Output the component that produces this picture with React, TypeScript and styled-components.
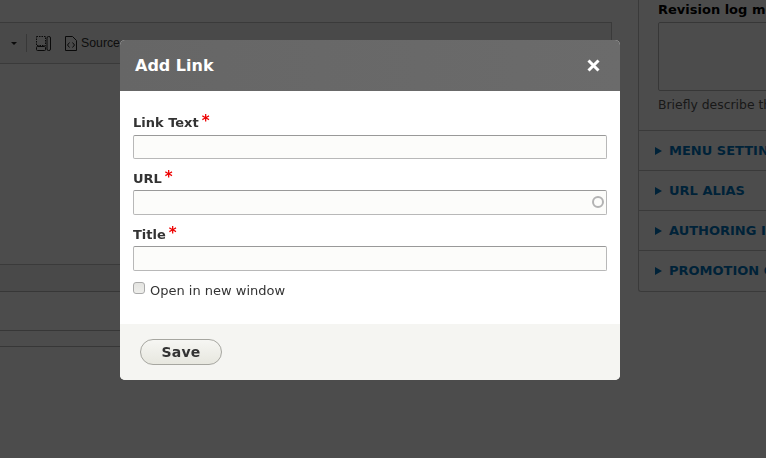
import React from 'react';
import styled, { createGlobalStyle } from 'styled-components';

const GlobalStyle = createGlobalStyle`
  html, body {
    margin: 0;
    padding: 0;
    height: 100%;
    overflow: hidden;
    background: #fff;
    font-family: "DejaVu Sans", Verdana, sans-serif;
    font-size: 13px;
    color: #333;
  }
  * { box-sizing: border-box; }
`;

const Page = styled.div`
  display: flex;
  width: 766px;
  height: 458px;
  overflow: hidden;
`;

const Main = styled.div`
  width: 612px;
  padding-top: 22px;
  flex: none;
`;

const Editor = styled.div`
  height: 243px;
  border: 1px solid #c4c4c4;
  border-left: 0;
`;

const Toolbar = styled.div`
  display: flex;
  align-items: center;
  height: 41px;
  padding-left: 10px;
  background: #f3f3f3;
  border-bottom: 1px solid #c4c4c4;
`;

const Caret = styled.span`
  width: 0;
  height: 0;
  border-left: 3px solid transparent;
  border-right: 3px solid transparent;
  border-top: 3px solid #222;
  margin-left: 1px;
`;

const Divider = styled.span`
  width: 1px;
  height: 18px;
  margin: 0 9px 0 9px;
  background: #bbb;
`;

const ToolIcon = styled.svg`
  flex: none;
  margin-right: 14px;
  &:last-of-type { margin-right: 4px; }
`;

const ToolLabel = styled.span`
  font-family: "Liberation Sans", Arial, sans-serif;
  font-size: 12.3px;
  color: #333;
`;

const Row = styled.div<{ $h: number; $shade?: boolean }>`
  height: ${p => p.$h}px;
  background: ${p => (p.$shade ? '#f3f3f3' : '#fff')};
  border-bottom: 1px solid #b8b8b8;
`;

const Sidebar = styled.aside`
  width: 154px;
  height: 292px;
  margin-left: 26px;
  flex: none;
  border-left: 1px solid #c4c4c4;
  border-bottom: 1px solid #c4c4c4;
  border-bottom-left-radius: 3px;
  overflow: hidden;
`;

const Revision = styled.div`
  height: 130px;
  padding: 2px 0 0 19px;
  white-space: nowrap;
`;

const RevisionLabel = styled.div`
  font-weight: bold;
  font-size: 13px;
  line-height: 16px;
  color: #000;
`;

const RevisionBox = styled.div`
  width: 180px;
  height: 69px;
  margin-top: 4px;
  border: 1px solid #b8b8b8;
  border-radius: 2px;
`;

const RevisionHint = styled.div`
  margin-top: 6px;
  font-size: 12.4px;
  line-height: 16px;
  color: #555;
`;

const Section = styled.div`
  display: flex;
  align-items: center;
  gap: 7px;
  height: 40px;
  padding-left: 16px;
  border-top: 1px solid #c4c4c4;
  color: #0074bd;
  font-weight: bold;
  font-size: 13px;
  white-space: nowrap;
`;

const Arrow = styled.span`
  width: 0;
  height: 0;
  flex: none;
  border-top: 4px solid transparent;
  border-bottom: 4px solid transparent;
  border-left: 7px solid #0074bd;
`;

const Overlay = styled.div`
  position: fixed;
  inset: 0;
  padding: 40px 0 0 120px;
  background: rgba(0, 0, 0, 0.7);
`;

const Dialog = styled.div`
  width: 500px;
  height: 340px;
  display: flex;
  flex-direction: column;
  border-radius: 5px;
  overflow: hidden;
  background: #fff;
`;

const TitleBar = styled.div`
  display: flex;
  align-items: center;
  justify-content: space-between;
  height: 51px;
  padding: 0 20px 0 15px;
  background: linear-gradient(to right, #666, #6b6b6b);
`;

const Title = styled.h2`
  margin: 0;
  font-size: 16px;
  font-weight: bold;
  color: #fff;
`;

const Close = styled.svg`
  display: block;
`;

const Form = styled.form`
  flex: 1;
  padding: 20px 13px 0;
`;

const Label = styled.label`
  display: block;
  height: 23px;
  font-size: 13px;
  font-weight: bold;
  line-height: 22px;
  color: #333;
`;

const Field = styled.div`
  margin-bottom: 8px;
  &:first-child ${Label} {
    height: 24px;
  }
`;

const Star = styled.span`
  position: relative;
  top: -1px;
  margin-left: 3px;
  font-size: 15px;
  font-weight: bold;
  color: #e00;
`;

const InputWrap = styled.div`
  position: relative;
`;

const Input = styled.input<{ $h: number }>`
  display: block;
  width: 474px;
  height: ${p => p.$h}px;
  padding: 0;
  background: #fcfcfa;
  border: 1px solid #b8b8b8;
  border-top-color: #999;
  border-radius: 2px;
  outline: none;
`;

const Throbber = styled.span`
  position: absolute;
  right: 3px;
  top: 6px;
  width: 12px;
  height: 12px;
  border: 2px solid #b3b3b3;
  border-radius: 50%;
`;

const CheckRow = styled.div`
  display: flex;
  align-items: flex-start;
  gap: 5px;
  margin-top: 11px;
`;

const Check = styled.span`
  width: 12px;
  height: 12px;
  background: linear-gradient(#e4e4e1, #eeeeeb);
  border: 1px solid #aaa;
  border-radius: 3px;
`;

const CheckLabel = styled.span`
  margin-top: 1px;
  font-size: 13px;
  line-height: 16px;
  color: #333;
`;

const Footer = styled.div`
  height: 56px;
  padding: 15px 20px;
  background: #f5f5f2;
`;

const SaveButton = styled.button`
  display: block;
  width: 82px;
  height: 26px;
  padding: 0;
  font-family: inherit;
  font-size: 14px;
  font-weight: bold;
  letter-spacing: 0.2px;
  color: #333;
  background: linear-gradient(#f6f6f3, #e7e7df);
  border: 1px solid #a6a6a0;
  border-radius: 20px;
`;

const sections = ['Menu settings', 'URL alias', 'Authoring information', 'Promotion options'];

const fields = [
  { name: 'Link Text', height: 24 },
  { name: 'URL', height: 25, busy: true },
  { name: 'Title', height: 25 },
];

export default function App() {
  return (
    <>
      <GlobalStyle />
      <Page>
        <Main>
          <Editor>
            <Toolbar>
              <Caret />
              <Divider />
              <ToolIcon width="15" height="15" viewBox="0 0 15 15" fill="none" stroke="#222" strokeWidth="1">
                <rect x="0.5" y="0.5" width="9" height="9" strokeDasharray="1.5 1" />
                <rect x="0.5" y="10.5" width="9" height="4" rx="1" />
                <rect x="11" y="0.5" width="3.5" height="14" rx="1.5" />
              </ToolIcon>
              <ToolIcon width="12" height="15" viewBox="0 0 12 15" fill="none" stroke="#222" strokeWidth="1">
                <path d="M0.5 0.5H7.5L11.5 4.5V14.5H0.5Z" />
                <path d="M4.5 6.5L2.5 9L4.5 11.5M7.5 6.5L9.5 9L7.5 11.5" />
              </ToolIcon>
              <ToolLabel>Source</ToolLabel>
            </Toolbar>
          </Editor>
          <Row $h={27} $shade />
          <Row $h={39} />
          <Row $h={16} />
        </Main>
        <Sidebar>
          <Revision>
            <RevisionLabel>Revision log message</RevisionLabel>
            <RevisionBox />
            <RevisionHint>Briefly describe the changes</RevisionHint>
          </Revision>
          {sections.map(s => (
            <Section key={s}>
              <Arrow />
              {s.toUpperCase()}
            </Section>
          ))}
        </Sidebar>
      </Page>
      <Overlay>
        <Dialog>
          <TitleBar>
            <Title>Add Link</Title>
            <Close width="13" height="13" viewBox="0 0 13 13">
              <path d="M1.5 1.5L11.5 11.5M11.5 1.5L1.5 11.5" stroke="#fff" strokeWidth="3" />
            </Close>
          </TitleBar>
          <Form>
            {fields.map(f => (
              <Field key={f.name}>
                <Label>
                  {f.name}
                  <Star>*</Star>
                </Label>
                <InputWrap>
                  <Input type="text" $h={f.height} />
                  {f.busy && <Throbber />}
                </InputWrap>
              </Field>
            ))}
            <CheckRow>
              <Check />
              <CheckLabel>Open in new window</CheckLabel>
            </CheckRow>
          </Form>
          <Footer>
            <SaveButton type="button">Save</SaveButton>
          </Footer>
        </Dialog>
      </Overlay>
    </>
  );
}
